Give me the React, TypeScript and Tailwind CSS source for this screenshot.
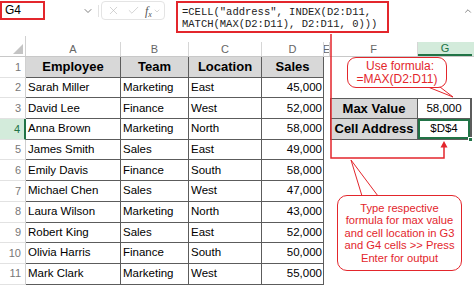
import React from "react";
import { ChevronDown, ChevronUp, X, Check } from "lucide-react";

const data = [
  ["Sarah Miller", "Marketing", "East", "45,000"],
  ["David Lee", "Finance", "West", "52,000"],
  ["Anna Brown", "Marketing", "North", "58,000"],
  ["James Smith", "Sales", "East", "49,000"],
  ["Emily Davis", "Finance", "South", "58,000"],
  ["Michael Chen", "Sales", "West", "47,000"],
  ["Laura Wilson", "Marketing", "North", "43,000"],
  ["Robert King", "Sales", "East", "52,000"],
  ["Olivia Harris", "Finance", "South", "50,000"],
  ["Mark Clark", "Marketing", "West", "55,000"],
];

const cell = "border-r-[1.5px] border-b-[1.5px] border-[#5c5c5c] flex items-center";

const RowHead = ({ n, active }: { n: number; active?: boolean }) => (
  <div
    className={
      active
        ? "w-[26px] shrink-0 flex items-center justify-end pr-[4px] text-[11px] text-[#217346] bg-[#d3ebdb] border-r-2 border-r-[#217346] border-b border-b-[#e2e2e2]"
        : "w-[26px] shrink-0 flex items-center justify-end pr-[4px] text-[11px] text-[#777] border-r border-r-[#d0d0d0] border-b border-b-[#e2e2e2]"
    }
  >
    {n}
  </div>
);

const Side = ({ r }: { r: number }) => {
  if (r === 3)
    return (
      <>
        <div className="w-[88px] shrink-0 bg-[#d8d8d8] border-[1.5px] border-[#5c5c5c] flex items-center justify-center font-bold text-[13px]">
          Max Value
        </div>
        <div className="w-[54px] shrink-0 border-t-[1.5px] border-b-[1.5px] border-r-2 border-[#5c5c5c] flex items-center justify-center text-[11.5px]">
          58,000
        </div>
      </>
    );
  if (r === 4)
    return (
      <>
        <div className="w-[88px] shrink-0 bg-[#d8d8d8] border-x-[1.5px] border-b-[1.5px] border-[#5c5c5c] flex items-center justify-center font-bold text-[13px]">
          Cell Address
        </div>
        <div className="relative w-[54px] shrink-0 border-b-[1.5px] border-r-2 border-[#5c5c5c] flex items-center justify-center text-[11.5px]">
          <div className="absolute inset-0 border-2 border-[#217346]" />
          <div className="absolute right-[-3px] bottom-[-3px] w-[5px] h-[5px] bg-[#217346] border border-white" />
          $D$4
        </div>
      </>
    );
  return <div className="w-[142px] shrink-0" />;
};

export default function App() {
  return (
    <div className="relative w-[474px] h-[287px] overflow-hidden bg-white text-black font-['Liberation_Sans',Arial,sans-serif]">
      {/* formula bar */}
      <div className="flex items-start h-[36px] pt-[1px]">
        <div className="flex items-center w-[95px] h-[19px] shrink-0">
          <div className="w-[45px] h-full border-2 border-[#e3262c] pl-[3px] text-[12px] leading-[15px]">G4</div>
          <div className="flex-1" />
          <ChevronDown size={12} strokeWidth={1.5} className="text-[#555] mr-[1px]" />
        </div>
        <div className="w-[6px] h-[19px] flex items-center justify-center">
          <div className="w-px h-[12px] bg-[#e2e2e2]" />
        </div>
        <div className="flex items-center w-[64px] h-[19px] rounded-[4px] border border-[#e4e4e4] shrink-0">
          <X size={13} strokeWidth={1.2} className="text-[#bdbdbd] ml-[5px]" />
          <Check size={13} strokeWidth={1.2} className="text-[#bdbdbd] ml-[7px]" />
          <span className="ml-[5px] text-[12px] italic font-['Liberation_Serif',serif] text-[#555]">
            f<sub className="text-[8px]">x</sub>
          </span>
          <ChevronDown size={8} strokeWidth={1.5} className="text-[#aaa] ml-[1px]" />
        </div>
        <div className="ml-[11px] w-[213px] h-[32px] border-2 border-[#e3262c] pl-[4px] pt-[3px] font-['Liberation_Mono',monospace] text-[10.5px] leading-[12px] whitespace-pre text-[#222] shrink-0">
          <div>{'=CELL("address", INDEX(D2:D11,'}</div>
          <div>{"MATCH(MAX(D2:D11), D2:D11, 0)))"}</div>
        </div>
        <div className="flex-1" />
        <ChevronUp size={10} strokeWidth={1.5} className="text-[#444] mt-[5px] mr-[1px]" />
      </div>

      {/* spacer above column headers */}
      <div className="flex h-[6px]">
        <div className="w-[26px] border-r border-[#d0d0d0]" />
      </div>

      {/* column headers */}
      <div className="flex h-[15px] text-[11px] text-[#666] border-b border-[#c8c8c8]">
        <div className="relative w-[26px] shrink-0 border-r border-[#d0d0d0]">
          <svg className="absolute right-[2px] bottom-[2px]" width="10" height="10">
            <polygon points="10,0 10,10 0,10" fill="#c4c4c4" />
          </svg>
        </div>
        <div className="w-[95px] shrink-0 border-r border-[#d6d6d6] flex items-center justify-center">A</div>
        <div className="w-[68px] shrink-0 border-r border-[#d6d6d6] flex items-center justify-center">B</div>
        <div className="w-[73px] shrink-0 border-r border-[#d6d6d6] flex items-center justify-center">C</div>
        <div className="w-[62px] shrink-0 border-r border-[#d6d6d6] flex items-center justify-center">D</div>
        <div className="w-[6px] shrink-0 border-r border-[#d6d6d6] flex items-center justify-center overflow-hidden">E</div>
        <div className="w-[88px] shrink-0 border-r border-[#d6d6d6] flex items-center justify-center">F</div>
        <div className="w-[54px] shrink-0 bg-[#d3ebdb] text-[#217346] border-b-2 border-[#217346] flex items-center justify-center">G</div>
        <div className="flex-1 bg-[#d3ebdb]" />
      </div>

      {/* row 1 header */}
      <div className="flex h-[20.7px]">
        <RowHead n={1} />
        <div className={`${cell} w-[95px] shrink-0 justify-center bg-[#d8d8d8] font-bold text-[13px]`}>Employee</div>
        <div className={`${cell} w-[68px] shrink-0 justify-center bg-[#d8d8d8] font-bold text-[13px]`}>Team</div>
        <div className={`${cell} w-[73px] shrink-0 justify-center bg-[#d8d8d8] font-bold text-[13px]`}>Location</div>
        <div className={`${cell} w-[62px] shrink-0 justify-center bg-[#d8d8d8] font-bold text-[13px]`}>Sales</div>
      </div>

      {data.map((d, i) => {
        const r = i + 2;
        return (
          <div key={r} className="flex h-[20.7px] text-[11.5px]">
            <RowHead n={r} active={r === 4} />
            <div className={`${cell} w-[95px] shrink-0 pl-[2px]`}>{d[0]}</div>
            <div className={`${cell} w-[68px] shrink-0 pl-[2px]`}>{d[1]}</div>
            <div className={`${cell} w-[73px] shrink-0 pl-[2px]`}>{d[2]}</div>
            <div className={`${cell} w-[62px] shrink-0 justify-end pr-[1px]`}>{d[3]}</div>
            <div className="w-[6px] shrink-0" />
            <Side r={r} />
          </div>
        );
      })}

      {/* annotation lines */}
      <svg className="absolute left-0 top-0 pointer-events-none" width="474" height="287">
        <polyline points="331,34 331,158 444,158 444,147" fill="none" stroke="#e3262c" strokeWidth="1.5" />
        <polygon points="440.5,147.5 447.5,147.5 444,141" fill="#e3262c" />
        <polygon points="428,87 440,87 453,97" fill="white" stroke="#e3262c" strokeWidth="1" />
        <polygon points="362,196 378,196 351,160" fill="white" stroke="#e3262c" strokeWidth="1" />
      </svg>

      {/* callouts */}
      <div className="absolute left-[347px] top-[57px] w-[100px] h-[31px] rounded-[9px] border border-[#e3262c] bg-white text-[#e3262c] text-[12px] leading-[13px] flex flex-col items-center justify-center">
        <div className="pl-[6px]">Use formula:</div>
        <div>=MAX(D2:D11)</div>
      </div>
      <div className="absolute left-[337px] top-[195px] w-[125px] h-[76px] rounded-[10px] border border-[#e3262c] bg-white text-[#e3262c] text-[11.2px] leading-[12.5px] flex flex-col items-center justify-center text-center">
        <div>Type respective</div>
        <div>formula for max value</div>
        <div>and cell location in G3</div>
        <div>and G4 cells &gt;&gt; Press</div>
        <div>Enter for output</div>
      </div>
    </div>
  );
}
